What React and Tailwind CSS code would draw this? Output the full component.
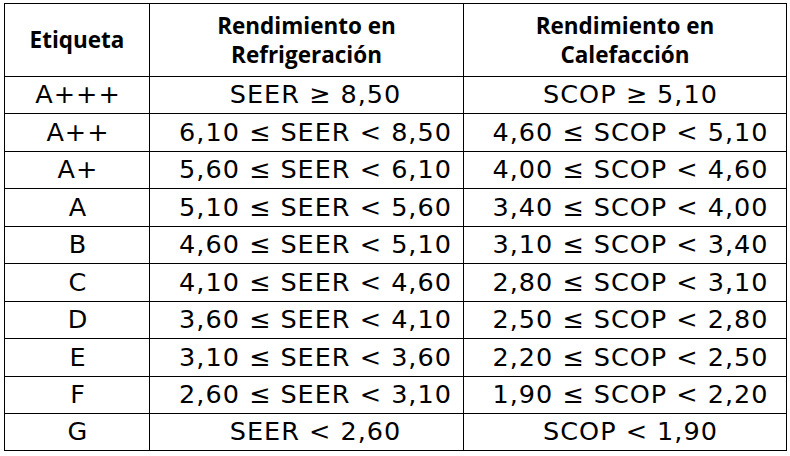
const rows = [
  ["A+++", "SEER ≥ 8,50", "SCOP ≥ 5,10"],
  ["A++", "6,10 ≤ SEER < 8,50", "4,60 ≤ SCOP < 5,10"],
  ["A+", "5,60 ≤ SEER < 6,10", "4,00 ≤ SCOP < 4,60"],
  ["A", "5,10 ≤ SEER < 5,60", "3,40 ≤ SCOP < 4,00"],
  ["B", "4,60 ≤ SEER < 5,10", "3,10 ≤ SCOP < 3,40"],
  ["C", "4,10 ≤ SEER < 4,60", "2,80 ≤ SCOP < 3,10"],
  ["D", "3,60 ≤ SEER < 4,10", "2,50 ≤ SCOP < 2,80"],
  ["E", "3,10 ≤ SEER < 3,60", "2,20 ≤ SCOP < 2,50"],
  ["F", "2,60 ≤ SEER < 3,10", "1,90 ≤ SCOP < 2,20"],
  ["G", "SEER < 2,60", "SCOP < 1,90"],
];

const pads = ["pl-[2px]", "pl-[18px]", "pl-[11px]"];

export default function App() {
  return (
    <div className="w-[790px] h-[456px] bg-white pt-[3px] pl-[4px]">
      <table className="border-collapse table-fixed w-[782px] text-black">
        <colgroup>
          <col className="w-[145px]" />
          <col className="w-[314px]" />
          <col className="w-[323px]" />
        </colgroup>
        <thead>
          <tr className="h-[73px] font-['Open_Sans',sans-serif] font-bold text-[22.5px] leading-[29.5px]">
            <th className="border border-black text-center align-middle">Etiqueta</th>
            <th className="border border-black text-center align-middle">
              Rendimiento en
              <br />
              Refrigeración
            </th>
            <th className="border border-black text-center align-middle">
              Rendimiento en
              <br />
              Calefacción
            </th>
          </tr>
        </thead>
        <tbody className="font-['DejaVu_Sans',Verdana,sans-serif] text-[25.5px] leading-none tracking-[1px]">
          {rows.map((r) => (
            <tr key={r[0]} className="h-[37.45px]">
              {r.map((c, i) => (
                <td key={i} className={`border border-black text-center align-middle py-0 pr-0 whitespace-nowrap ${pads[i]}`}>
                  {c}
                </td>
              ))}
            </tr>
          ))}
        </tbody>
      </table>
    </div>
  );
}
